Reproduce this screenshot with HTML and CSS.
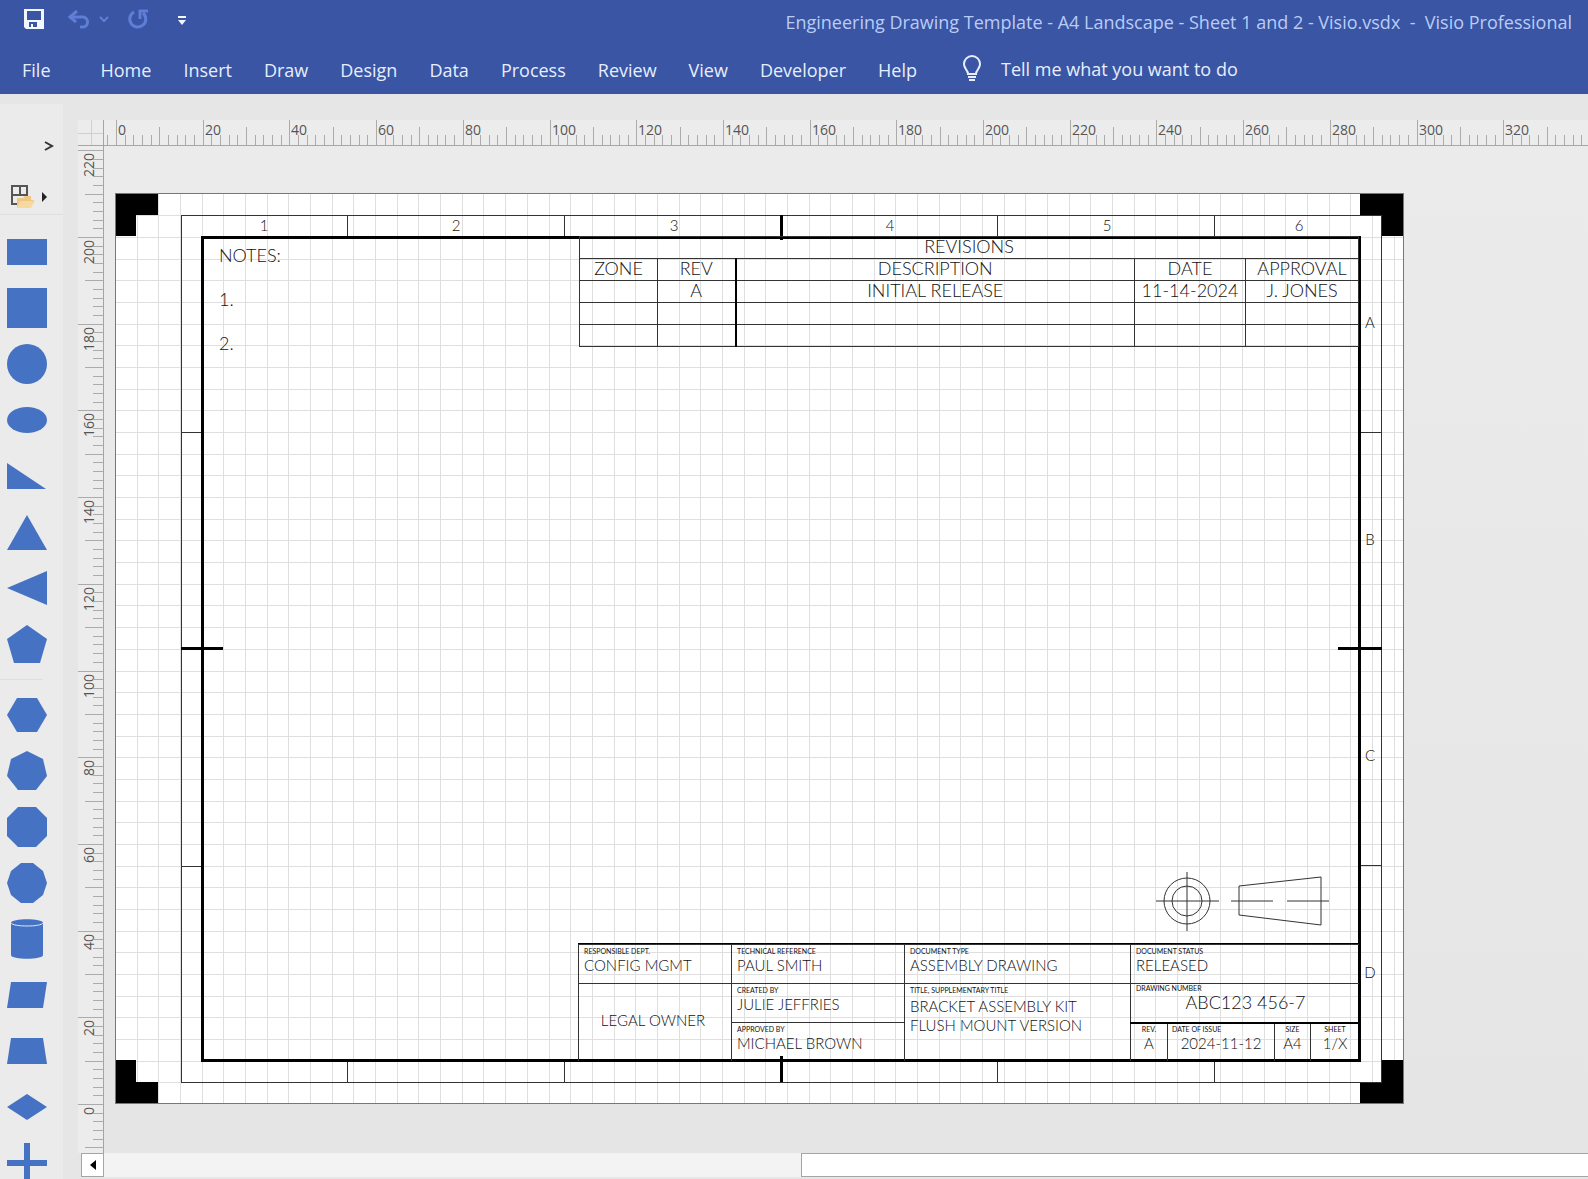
FILE: index.html
```html
<!DOCTYPE html>
<html lang="en">
<head>
<meta charset="utf-8">
<title>Engineering Drawing Template - Visio Professional</title>
<link rel="stylesheet" href="styles.css">
</head>
<body>
<header class="app-header">
  <div class="title-bar">
    <div class="quick-access">
      <button class="qa-button qa-save" type="button" aria-label="Save">
        <svg width="22" height="22" viewBox="0 0 22 22"><path fill="#f2f6ff" fill-rule="evenodd" d="M1 1h20v20H3l-2-2zM4 3v9h14V3zM6 14v5h2v-3h2v3h4v-5z"/></svg>
      </button>
      <button class="qa-button qa-undo" type="button" aria-label="Undo">
        <svg width="24" height="22" viewBox="0 0 24 22" fill="none" stroke="#5f7fd6" stroke-width="3"><path d="M3 9h12a5 5 0 0 1 1 10h-3"/><path d="M10 3L3 9l6 5"/></svg>
      </button>
      <button class="qa-button qa-undo-list" type="button" aria-label="Undo list">
        <svg width="10" height="8" viewBox="0 0 10 8" fill="none" stroke="#5f7fd6" stroke-width="2"><path d="M1 2l4 4 4-4"/></svg>
      </button>
      <button class="qa-button qa-repeat" type="button" aria-label="Repeat">
        <svg width="24" height="24" viewBox="0 0 24 24" fill="none" stroke="#5f7fd6" stroke-width="3"><path d="M8 5a8 8 0 1 0 9 1"/><path d="M22 4h-8v8"/></svg>
      </button>
      <button class="qa-button qa-more" type="button" aria-label="Customize Quick Access Toolbar">
        <svg width="8" height="10" viewBox="0 0 8 10" fill="#f2f6ff"><path d="M0 0h8v2H0zM0 4h8L4 9z"/></svg>
      </button>
    </div>
    <h1 class="document-title">Engineering Drawing Template - A4 Landscape - Sheet 1 and 2 - Visio.vsdx&nbsp; -&nbsp; Visio Professional</h1>
  </div>
  <div class="ribbon">
    <nav class="tabs">
      <a class="tab tab-file" href="#file">File</a>
      <a class="tab" href="#home">Home</a>
      <a class="tab" href="#insert">Insert</a>
      <a class="tab" href="#draw">Draw</a>
      <a class="tab" href="#design">Design</a>
      <a class="tab" href="#data">Data</a>
      <a class="tab" href="#process">Process</a>
      <a class="tab" href="#review">Review</a>
      <a class="tab" href="#view">View</a>
      <a class="tab" href="#developer">Developer</a>
      <a class="tab" href="#help">Help</a>
    </nav>
    <label class="tell-me">
      <svg width="20" height="28" viewBox="0 0 20 28" fill="none" stroke="#e6eeff" stroke-width="2"><path d="M6 19c0-4-4-5-4-10a8 8 0 0 1 16 0c0 5-4 6-4 10z"/><path d="M6 22h8M7 25h6"/></svg>
      <input class="tell-me-input" type="text" placeholder="Tell me what you want to do" aria-label="Tell me what you want to do">
    </label>
  </div>
</header>

<main class="app-body">
  <aside class="stencils">
    <button class="expand" type="button" aria-label="Expand the Shapes window">
      <svg width="10" height="12" viewBox="0 0 10 12" fill="none" stroke="#333" stroke-width="2"><path d="M1 2l7 4-7 4"/></svg>
    </button>
    <button class="more-shapes" type="button" aria-label="More shapes">
      <svg width="36" height="26" viewBox="0 0 36 26"><path d="M1 2h15v9H1zM9 2v9M1 11v9h5" fill="none" stroke="#555" stroke-width="2"/><path d="M6 14h6l2-2h6v4h3l-4 8H6z" fill="#eec880"/><path d="M9 17h15l-4 7H6z" fill="#f6d99f"/><path d="M31 8l5 5-5 5z" fill="#222"/></svg>
    </button>
    <div class="shape-group">
      <button class="shape" type="button" aria-label="Rectangle"><svg viewBox="0 0 40 40"><path d="M0 7h40v26H0z"/></svg></button>
      <button class="shape" type="button" aria-label="Square"><svg viewBox="0 0 40 40"><path d="M0 0h40v40H0z"/></svg></button>
      <button class="shape" type="button" aria-label="Circle"><svg viewBox="0 0 40 40"><circle cx="20" cy="20" r="20"/></svg></button>
      <button class="shape" type="button" aria-label="Ellipse"><svg viewBox="0 0 40 40"><ellipse cx="20" cy="20" rx="20" ry="13"/></svg></button>
      <button class="shape" type="button" aria-label="Right triangle"><svg viewBox="0 0 40 40"><path d="M0 7l39 26H0z"/></svg></button>
      <button class="shape" type="button" aria-label="Triangle"><svg viewBox="0 0 40 40"><path d="M20 3l20 35H0z"/></svg></button>
      <button class="shape" type="button" aria-label="Left triangle"><svg viewBox="0 0 40 40"><path d="M40 3v34L0 20z"/></svg></button>
      <button class="shape" type="button" aria-label="Pentagon"><svg viewBox="0 0 40 40"><path d="M20 1l20 14-7 24H7L0 15z"/></svg></button>
    </div>
    <hr class="stencil-rule">
    <div class="shape-group">
      <button class="shape" type="button" aria-label="Hexagon"><svg viewBox="0 0 40 40"><path d="M10 3h20l10 17-10 17H10L0 20z"/></svg></button>
      <button class="shape" type="button" aria-label="Heptagon"><svg viewBox="0 0 40 40"><path d="M20 0l16 8 4 17-11 14H11L0 25 4 8z"/></svg></button>
      <button class="shape" type="button" aria-label="Octagon"><svg viewBox="0 0 40 40"><path d="M11 0h18l11 11v18L29 40H11L0 29V11z"/></svg></button>
      <button class="shape" type="button" aria-label="Decagon"><svg viewBox="0 0 40 40"><path d="M14 0h12l10 8 4 12-4 12-10 8H14L4 32 0 20 4 8z"/></svg></button>
      <button class="shape" type="button" aria-label="Can"><svg viewBox="0 0 40 40"><path d="M4 4c0-5 32-5 32 0v32c0 5-32 5-32 0z"/><path d="M4 4c2 4 30 4 32 0" fill="none" stroke="#dfe7f5"/></svg></button>
      <button class="shape" type="button" aria-label="Parallelogram"><svg viewBox="0 0 40 40"><path d="M4 7h36l-4 26H0z"/></svg></button>
      <button class="shape" type="button" aria-label="Trapezoid"><svg viewBox="0 0 40 40"><path d="M4 7h32l4 26H0z"/></svg></button>
      <button class="shape" type="button" aria-label="Diamond"><svg viewBox="0 0 40 40"><path d="M20 7l20 13-20 13L0 20z"/></svg></button>
      <button class="shape" type="button" aria-label="Cross"><svg viewBox="0 0 40 40"><path d="M17 0h6v17h17v6H23v17h-6V23H0v-6h17z"/></svg></button>
    </div>
  </aside>

  <section class="workspace">
    <div class="ruler-corner"></div>
    <svg class="ruler ruler-x" id="ruler-x"></svg>
    <svg class="ruler ruler-y" id="ruler-y"></svg>
    <div class="canvas">
      <article class="sheet">
        <svg class="sheet-lines" viewBox="0 0 1289 911">
          <g id="grid" class="grid"></g>
          <path d="M0 0H43V22H21V43H0zM1289 0H1245V22H1267V43H1289zM0 911H43V889H21V867H0zM1289 911H1245V889H1267V867H1289z"/>
          <g class="thin">
            <path d="M66 22H1266V889H66z"/>
            <path d="M232 22V44M449 22V44M882 22V44M1099 22V44M232 867V889M449 867V889M882 867V889M1099 867V889"/>
            <path d="M66 239H86M66 673H86M1244 239H1266M1244 672H1266"/>
          </g>
          <g class="thick">
            <path d="M87 44H1244V867H87z"/>
            <path d="M666 22V47M666 863V889M66 455H108M1223 455H1267"/>
          </g>
          <g class="symbol">
            <circle cx="1072" cy="708" r="23"/>
            <circle cx="1072" cy="708" r="15"/>
            <path d="M1041 708H1104M1072 679V738M1116 708H1158M1172 708H1214M1124 693L1206 684V732L1124 722z"/>
          </g>
          <g class="zone">
            <text x="149" y="38">1</text><text x="341" y="38">2</text><text x="559" y="38">3</text>
            <text x="775" y="38">4</text><text x="992" y="38">5</text><text x="1184" y="38">6</text>
            <text x="1255" y="135">A</text><text x="1255" y="352">B</text><text x="1255" y="568">C</text><text x="1255" y="785">D</text>
          </g>
        </svg>

        <div class="notes">
          <p>NOTES:</p>
          <p>1.</p>
          <p>2.</p>
        </div>

        <table class="revisions">
          <colgroup><col class="c-zone"><col class="c-rev"><col><col class="c-date"><col class="c-approval"></colgroup>
          <thead>
            <tr><th colspan="5">REVISIONS</th></tr>
            <tr><th>ZONE</th><th>REV</th><th>DESCRIPTION</th><th>DATE</th><th>APPROVAL</th></tr>
          </thead>
          <tbody>
            <tr><td></td><td>A</td><td>INITIAL RELEASE</td><td>11-14-2024</td><td>J. JONES</td></tr>
            <tr><td></td><td></td><td></td><td></td><td></td></tr>
            <tr><td></td><td></td><td></td><td></td><td></td></tr>
          </tbody>
        </table>

        <div class="title-block">
          <div class="cell"><span class="key">RESPONSIBLE DEPT.</span><span class="value">CONFIG MGMT</span></div>
          <div class="cell"><span class="key">TECHNICAL REFERENCE</span><span class="value">PAUL SMITH</span></div>
          <div class="cell"><span class="key">DOCUMENT TYPE</span><span class="value">ASSEMBLY DRAWING</span></div>
          <div class="cell"><span class="key">DOCUMENT STATUS</span><span class="value">RELEASED</span></div>
          <div class="cell owner"><span class="value">LEGAL OWNER</span></div>
          <div class="cell"><span class="key">CREATED BY</span><span class="value">JULIE JEFFRIES</span></div>
          <div class="cell drawing-title"><span class="key">TITLE, SUPPLEMENTARY TITLE</span><span class="value">BRACKET ASSEMBLY KIT<br>FLUSH MOUNT VERSION</span></div>
          <div class="cell number"><span class="key">DRAWING NUMBER</span><span class="value">ABC123 456-7</span></div>
          <div class="cell"><span class="key">APPROVED BY</span><span class="value">MICHAEL BROWN</span></div>
          <div class="issue">
            <div class="cell"><span class="key">REV.</span><span class="value">A</span></div>
            <div class="cell issue-date"><span class="key">DATE OF ISSUE</span><span class="value">2024-11-12</span></div>
            <div class="cell"><span class="key">SIZE</span><span class="value">A4</span></div>
            <div class="cell"><span class="key">SHEET</span><span class="value">1/X</span></div>
          </div>
        </div>
      </article>
    </div>
    <div class="scrollbar">
      <button class="scroll-left" type="button" aria-label="Scroll left"><svg width="8" height="12" viewBox="0 0 8 12"><path d="M7 1v10L1 6z"/></svg></button>
      <div class="scroll-track"><div class="scroll-thumb"></div></div>
    </div>
  </section>
</main>
<script src="rulers.js"></script>
</body>
</html>
```

FILE: styles.css
```css
* { box-sizing: border-box; }

body {
  margin: 0;
  height: 100vh;
  display: flex;
  flex-direction: column;
  overflow: hidden;
  background: #e6e6e6;
  font-family: "Open Sans", "Noto Sans", sans-serif;
}

button {
  padding: 0;
  border: 0;
  background: none;
  font: inherit;
}

svg { display: block; }

/* Header */
.app-header {
  flex: none;
  background: #3955a3;
  color: #e6eeff;
}

.title-bar {
  display: flex;
  justify-content: space-between;
  height: 44px;
  padding: 0 16px 0 23px;
}

.quick-access {
  display: flex;
  align-items: center;
  height: 38px;
}

.qa-undo { margin-left: 22px; }
.qa-undo-list { margin-left: 8px; }
.qa-repeat { margin-left: 17px; }
.qa-more { margin-left: 28px; padding-top: 4px; }

.document-title {
  margin: 0;
  font-size: 18px;
  font-weight: 400;
  line-height: 44px;
  color: #b9ccf8;
  white-space: nowrap;
}

.ribbon {
  display: flex;
  align-items: center;
  height: 50px;
  padding-left: 22px;
}

.tabs {
  display: flex;
  gap: 32px;
}

.tab {
  padding-top: 2px;
  color: inherit;
  font-size: 18px;
  line-height: 50px;
  text-decoration: none;
}

.tab-file { margin-right: 18px; }

.tell-me {
  display: flex;
  align-items: center;
  gap: 19px;
  margin-left: 45px;
}

.tell-me-input {
  width: 280px;
  padding: 0;
  border: 0;
  background: none;
  color: inherit;
  font: 18px "Open Sans", "Noto Sans", sans-serif;
}

.tell-me-input::placeholder { color: #e6eeff; opacity: 1; }

/* Shapes window */
.app-body {
  flex: 1;
  min-height: 0;
  display: flex;
}

.stencils {
  flex: none;
  width: 63px;
  margin-top: 10px;
  background: #ebebeb;
  overflow: hidden;
}

.expand {
  display: block;
  margin: 36px 0 0 44px;
}

.more-shapes {
  display: flex;
  width: 100%;
  height: 63px;
  align-items: flex-end;
  padding: 0 0 4px 11px;
  border-bottom: 1px solid #dedede;
}

.shape-group { padding-top: 9px; }
.stencil-rule + .shape-group { padding-top: 0; }

.shape {
  display: flex;
  align-items: center;
  width: 100%;
  height: 56px;
  padding-left: 7px;
}

.shape svg {
  width: 40px;
  height: 40px;
  fill: #4672c4;
}

.stencil-rule {
  height: 1px;
  margin: 7px 20px 7px 0;
  border: 0;
  background: #dedede;
}

/* Workspace */
.workspace {
  flex: 1;
  min-width: 0;
  display: grid;
  grid-template-columns: 26px minmax(0, 1fr);
  grid-template-rows: 26px minmax(0, 1fr) 26px;
  margin: 26px 0 0 15px;
}

.ruler-corner {
  background:
    linear-gradient(#d0d0d0, #d0d0d0) 13px 0 / 1px 100% no-repeat,
    linear-gradient(#d0d0d0, #d0d0d0) 0 13px / 100% 1px no-repeat,
    #ececec;
  border-right: 1px solid #a5a5a5;
  border-bottom: 1px solid #a5a5a5;
}

.ruler {
  width: 100%;
  height: 100%;
  background: #ececec;
  overflow: hidden;
}

.ruler-x { border-bottom: 1px solid #a5a5a5; }
.ruler-y { border-right: 1px solid #a5a5a5; }
.ruler line { stroke: #ababab; shape-rendering: crispEdges; }
.ruler text { font-size: 14px; fill: #555; }
.ruler-y text { text-anchor: end; }

.canvas {
  padding: 47px 0 0 11px;
  background: linear-gradient(#ebebeb, #e5e5e5);
  overflow: hidden;
}

.sheet {
  position: relative;
  width: 1289px;
  height: 911px;
  background: #fff;
  outline: 1px solid #777;
  outline-offset: -1px;
  color: #111;
  font-family: "Century Gothic", Lato, sans-serif;
  font-weight: 300;
}

.sheet-lines { width: 100%; height: 100%; }
.grid { stroke: #dfdfdf; shape-rendering: crispEdges; }
.thin { fill: none; stroke: #333; shape-rendering: crispEdges; }
.thick { fill: none; stroke: #000; stroke-width: 3px; shape-rendering: crispEdges; }
.symbol { fill: none; stroke: #333; }
.zone { font-size: 15px; fill: #111; text-anchor: middle; }

.notes {
  position: absolute;
  left: 104px;
  top: 40px;
  font-size: 18px;
  line-height: 44px;
}

.notes p { margin: 0; }

.revisions {
  position: absolute;
  left: 464px;
  top: 43px;
  width: 780px;
  table-layout: fixed;
  border-collapse: collapse;
  font-size: 18px;
}

.c-zone, .c-rev { width: 78px; }
.c-date { width: 111px; }
.c-approval { width: 113px; }

.revisions th,
.revisions td {
  height: 22px;
  padding: 0 0 2px;
  border: 1px solid #333;
  font-weight: 300;
  line-height: 19px;
  text-align: center;
  white-space: nowrap;
}

.revisions tr + tr > :nth-child(2),
.revisions td:nth-child(2) { border-right: 2px solid #000; }

/* Title block */
.title-block {
  position: absolute;
  left: 463px;
  top: 750px;
  width: 781px;
  display: grid;
  grid-template-columns: 153px 173px 226px 1fr;
  grid-template-rows: repeat(3, 39px);
  border-top: 1px solid #000;
  font-size: 15px;
}

.cell {
  display: flex;
  flex-direction: column;
  padding: 2px 0 0 5px;
  border-top: 1px solid #333;
  border-left: 1px solid #333;
  white-space: nowrap;
}

.key {
  font-size: 7px;
  font-weight: 400;
  line-height: 8px;
}

.value { line-height: 20px; }

.owner {
  grid-row: span 2;
  padding: 0 4px 6px 0;
  align-items: center;
  justify-content: center;
}

.drawing-title { grid-row: span 2; }
.drawing-title .value { padding-top: 3px; line-height: 19px; }

.number { padding-top: 0; }
.number .value { text-align: center; font-size: 18px; padding-right: 4px; }

.issue {
  display: grid;
  grid-template-columns: 37px 107px 36px 1fr;
  border-top: 2px solid #000;
}

.issue .cell {
  border-top: 0;
  padding: 1px 0 0;
  text-align: center;
}

.issue .issue-date .key { padding-left: 4px; text-align: left; }

/* Scroll bar */
.scrollbar {
  grid-column: 1 / -1;
  display: flex;
  height: 24px;
  padding-left: 3px;
}

.scroll-left {
  width: 23px;
  display: grid;
  place-items: center;
  border: 1px solid #a5a5a5;
  background: #fff;
}

.scroll-track {
  flex: 1;
  background: #f3f3f3;
}

.scroll-thumb {
  height: 24px;
  margin-left: 47%;
  border: 1px solid #a5a5a5;
  border-right: 0;
  background: #fff;
}
```

FILE: rulers.js
```js
const SVG = "http://www.w3.org/2000/svg";
const PX_PER_MM = 4.335;
const SHEET = { width: 297, height: 210, left: 12, bottom: 958 };

const rulerX = document.getElementById("ruler-x");
const rulerY = document.getElementById("ruler-y");
const grid = document.getElementById("grid");

function add(parent, name, attrs, text) {
  const el = document.createElementNS(SVG, name);
  for (const key in attrs) el.setAttribute(key, attrs[key]);
  if (text !== undefined) el.textContent = text;
  parent.appendChild(el);
}

function tickStart(mm) {
  if (mm % 20 === 0) return 0;
  return mm % 10 === 0 ? 7 : 15;
}

function drawRulers() {
  rulerX.replaceChildren();
  rulerY.replaceChildren();
  const { width } = rulerX.getBoundingClientRect();
  const { height } = rulerY.getBoundingClientRect();

  for (let mm = -2; ; mm += 2) {
    const x = Math.round(SHEET.left + mm * PX_PER_MM);
    if (x >= width) break;
    add(rulerX, "line", { x1: x, x2: x, y1: tickStart(mm), y2: 26 });
    if (mm % 20 === 0 && x + 30 < width) add(rulerX, "text", { x: x + 2, y: 15 }, mm);
  }

  for (let mm = 220; ; mm -= 2) {
    const y = Math.round(SHEET.bottom - mm * PX_PER_MM);
    if (y >= height) break;
    add(rulerY, "line", { x1: tickStart(mm), x2: 26, y1: y, y2: y });
    if (mm % 20 === 0 && y + 30 < height) {
      add(rulerY, "text", { transform: `translate(16 ${y + 3}) rotate(-90)` }, Math.abs(mm));
    }
  }
}

for (let mm = 5; mm < SHEET.width; mm += 5) {
  const x = Math.round(mm * PX_PER_MM);
  add(grid, "line", { x1: x, x2: x, y1: 1, y2: 910 });
}
for (let mm = 5; mm < SHEET.height; mm += 5) {
  const y = Math.round(911 - mm * PX_PER_MM);
  add(grid, "line", { x1: 1, x2: 1288, y1: y, y2: y });
}

drawRulers();
window.addEventListener("resize", drawRulers);
```
